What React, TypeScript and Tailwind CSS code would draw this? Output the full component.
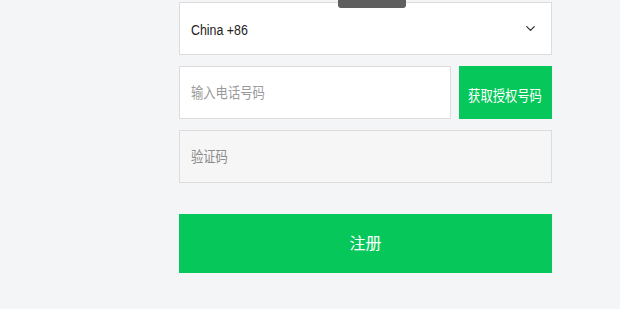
import { ChevronDown } from 'lucide-react'

const font = { fontFamily: '"Liberation Sans", "Noto Sans CJK SC", sans-serif' }

export default function App() {
   return (
      <div className="relative w-[620px] h-[309px] bg-[#f4f5f7] overflow-hidden" style={font}>
         <div className="absolute left-[338px] top-0 w-[68px] h-[8px] bg-[#5f5f5f] rounded-b-[3px]" />

         <div className="ml-[179px] pt-[2px] w-[373px] flex flex-col">
            <div className="h-[53px] bg-white border border-[#dcdcdc] flex items-center justify-between pl-[11px] pr-[13px] text-[15.5px] text-[#222]">
               <span className="inline-block origin-left scale-x-[0.8] pt-[2px]">China +86</span>
               <ChevronDown className="w-[15px] h-[15px] text-[#333]" strokeWidth={2} />
            </div>

            <div className="mt-[11px] flex gap-[8px]">
               <div className="flex-1 h-[53px] bg-white border border-[#dcdcdc] flex items-center pl-[11px] text-[15px] text-[#9a9a9a]">
                  <span className="inline-block origin-left scale-x-[0.82] pt-[2px]">输入电话号码</span>
               </div>
               <button className="w-[93px] h-[53px] bg-[#06c75a] text-white text-[15px] flex items-center justify-center pt-[8px]">
                  <span className="inline-block scale-x-[0.82] whitespace-nowrap">获取授权号码</span>
               </button>
            </div>

            <div className="mt-[11px] h-[53px] bg-[#f6f6f6] border border-[#dcdcdc] flex items-center pl-[11px] text-[15px] text-[#8c8c8c]">
               <span className="inline-block origin-left scale-x-[0.82] pt-[2px]">验证码</span>
            </div>

            <button className="mt-[31px] h-[59px] bg-[#06c75a] text-white text-[16px] flex items-center justify-center">
               注册
            </button>
         </div>
      </div>
   )
}
